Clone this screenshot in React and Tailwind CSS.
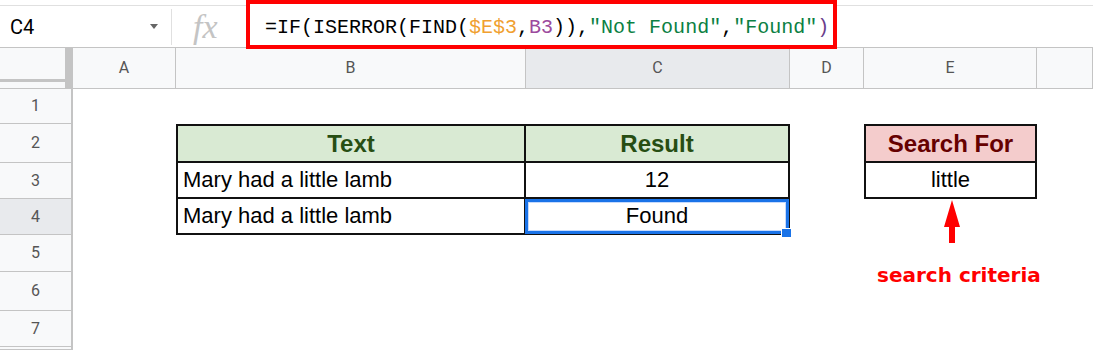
import React from 'react';

const cols = "grid grid-cols-[73px_103px_350px_264px_74px_173px_1fr]";
const rowHeights = [35, 39, 36, 36, 37, 39, 36, 3];

function FormulaBar() {
  return (
    <div className="flex h-[47px] items-start">
      <div className="mt-[5px] flex h-[42px] w-[171px] items-center justify-between border-t border-[#e0e0e0] pl-[10px] pr-[13px]">
        <span className="text-[20px] leading-none text-black">C4</span>
        <span className="h-0 w-0 border-x-[4px] border-t-[5px] border-x-transparent border-t-[#666]" />
      </div>
      <div className="mt-[5px] flex h-[42px] w-[75px] items-center border-t border-[#e0e0e0]">
        <div className="h-[36px] w-px bg-[#e0e0e0]" />
        <span className="ml-[21px] font-['Liberation_Serif',serif] text-[34px] italic leading-none text-[#c4c4c4]">fx</span>
      </div>
      <div className="relative z-10 flex h-[49px] w-[591px] items-center whitespace-pre border-4 border-[#ff0000] bg-white pl-[15px] pt-[6px] font-['Liberation_Mono',monospace] text-[20px] leading-none text-black">
        <span>=IF(ISERROR(FIND(</span>
        <span className="text-[#f0a030]">$E$3</span>
        <span>,</span>
        <span className="text-[#9c4a9e]">B3</span>
        <span>)),</span>
        <span className="text-[#0b8043]">"Not Found"</span>
        <span>,</span>
        <span className="text-[#0b8043]">"Found"</span>
        <span className="text-[#6a3d8a]">)</span>
      </div>
      <div className="mt-[5px] h-[42px] flex-1 border-t border-[#e0e0e0]" />
    </div>
  );
}

function HeaderRow() {
  const letters = ['A', 'B', 'C', 'D', 'E', ''];
  return (
    <div className={`${cols} h-[42px] border-t border-[#c4c4c4]`}>
      <div className="flex border-b border-[#c4c4c4]">
        <div className="flex flex-1 flex-col">
          <div className="flex-1 bg-[#f8f9fa]" />
          <div className="h-[3px] bg-[#c4c4c4]" />
          <div className="h-[6px] bg-[#f8f9fa]" />
        </div>
        <div className="w-[8px] bg-[#c4c4c4]" />
      </div>
      {letters.map((l, i) => (
        <div
          key={i}
          className={`flex items-center justify-center border-b border-r border-[#c4c4c4] text-[16px] text-[#555] ${l === 'C' ? 'bg-[#e8eaed]' : 'bg-[#f8f9fa]'}`}
        >
          {l}
        </div>
      ))}
    </div>
  );
}

const cellText = "font-['Liberation_Sans',Arial,sans-serif] text-[22px] leading-none text-black";
const headText = "font-['Liberation_Sans',Arial,sans-serif] text-[24px] font-bold leading-none";

function Row({ n, height }) {
  let b = null;
  let c = null;
  let e = null;

  if (n === 2) {
    b = <div className={`flex h-full items-center justify-center border-2 border-[#111] bg-[#d9ead3] text-[#274e13] ${headText}`}>Text</div>;
    c = <div className={`flex h-full items-center justify-center border-y-2 border-r-2 border-[#111] bg-[#d9ead3] text-[#274e13] ${headText}`}>Result</div>;
    e = <div className={`flex h-full items-center justify-center border-2 border-[#111] bg-[#f4cccc] text-[#660000] ${headText}`}>Search For</div>;
  }
  if (n === 3) {
    b = <div className={`flex h-full items-center border-x-2 border-b-2 border-[#111] pl-[5px] ${cellText}`}>Mary had a little lamb</div>;
    c = <div className={`flex h-full items-center justify-center border-b-2 border-r-2 border-[#111] ${cellText}`}>12</div>;
    e = <div className={`flex h-full items-center justify-center border-x-2 border-b-2 border-[#111] ${cellText}`}>little</div>;
  }
  if (n === 4) {
    b = <div className={`flex h-full items-center border-x-2 border-b-2 border-[#111] pl-[5px] ${cellText}`}>Mary had a little lamb</div>;
    c = (
      <div className={`relative flex h-full items-center justify-center border-b-2 border-r-2 border-[#111] ${cellText}`}>
        Found
        <div className="absolute -bottom-[1px] -left-[1px] -right-[1px] top-0 border-[3px] border-[#1a73e8]">
          <div className="h-full w-full border border-[#c6dafc]" />
        </div>
        <div className="absolute -bottom-[5px] -right-[4px] h-[10px] w-[11px] border border-white bg-[#1a73e8]" />
      </div>
    );
  }

  return (
    <div className={cols} style={{ height }}>
      <div
        className={`flex items-center justify-center border-b border-r-2 border-[#c4c4c4] text-[16px] text-[#555] ${n === 4 ? 'bg-[#e8eaed]' : 'bg-[#f8f9fa]'}`}
      >
        {n < 8 ? n : null}
      </div>
      <div />
      <div>{b}</div>
      <div>{c}</div>
      <div />
      <div>{e}</div>
      <div />
    </div>
  );
}

export default function App() {
  return (
    <div className="relative h-[350px] w-[1093px] overflow-hidden bg-white font-['Roboto',sans-serif]">
      <FormulaBar />
      <HeaderRow />
      {rowHeights.map((h, i) => (
        <Row key={i} n={i + 1} height={h} />
      ))}

      {/* annotation */}
      <svg className="absolute left-[940px] top-[200px]" width="24" height="44" viewBox="0 0 24 44">
        <polygon points="12,0 4,27 9,27 9,43 15,43 15,27 20,27" fill="#ff0000" />
      </svg>
      <div className="absolute left-[877px] top-[265px] font-['DejaVu_Sans',sans-serif] text-[20px] font-bold leading-none text-[#ff0000]">
        search criteria
      </div>
    </div>
  );
}
